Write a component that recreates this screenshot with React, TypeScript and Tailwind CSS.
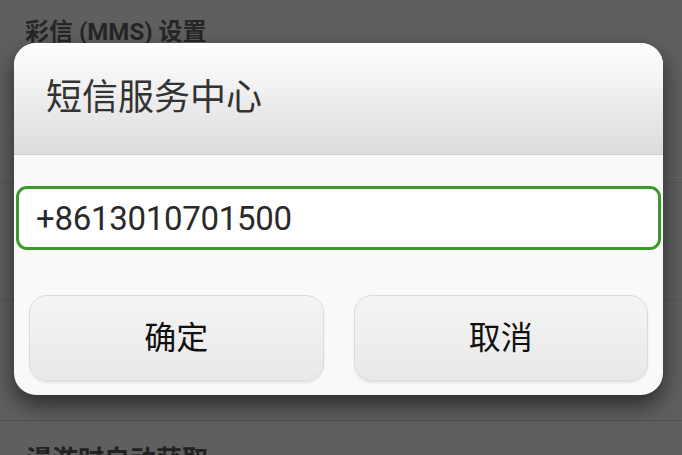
export default function App() {
  return (
    <div
      className="relative w-[682px] h-[455px] overflow-hidden bg-[#5f5f5f]"
      style={{ fontFamily: "Roboto, 'Noto Sans CJK SC', sans-serif" }}
    >
      {/* settings list behind the dialog */}
      <div className="flex flex-col">
        <div className="h-[62px] pl-[25px] pt-[14px] text-[24px] font-bold leading-[36px] text-[#262626]">
          彩信 (MMS) 设置
        </div>
        <div className="h-[121px] border-b border-[#555]" />
        <div className="h-[118px] border-b border-[#555]" />
        <div className="h-[120px] border-b border-[#4f4f4f]" />
        <div className="pl-[26px] pt-[22px] text-[26px] font-bold leading-[34px] text-[#222]">
          漫游时自动获取
        </div>
      </div>

      {/* dialog */}
      <div className="absolute left-[14px] top-[43px] w-[649px] h-[352px] rounded-[22px] overflow-hidden bg-[#f9f9f9] shadow-[0_10px_22px_rgba(0,0,0,0.55)] flex flex-col">
        <div className="h-[112px] border-b border-[#d0d0d0] bg-gradient-to-b from-[#ffffff] to-[#dcdcdc] pl-[32px] pt-[32px]">
          <span className="text-[36px] leading-[46px] text-[#333]">短信服务中心</span>
        </div>
        <div className="flex flex-col px-[2px] pt-[31px]">
          <div className="h-[64px] rounded-[11px] border-[3px] border-[#3c9a2c] bg-white flex items-center pl-[17px]">
            <span className="text-[33px] leading-none text-[#2a2a2a] tracking-[-0.3px]">+8613010701500</span>
          </div>
        </div>
        <div className="grid grid-cols-2 gap-[30px] px-[15px] pt-[45px]">
          <button className="h-[86px] rounded-[18px] border border-[#dadada] bg-gradient-to-b from-[#f4f4f4] to-[#e9e9e9] shadow-[0_2px_2px_rgba(0,0,0,0.08)] text-[32px] text-[#111]">
            确定
          </button>
          <button className="h-[86px] rounded-[18px] border border-[#dadada] bg-gradient-to-b from-[#f4f4f4] to-[#e9e9e9] shadow-[0_2px_2px_rgba(0,0,0,0.08)] text-[32px] text-[#111]">
            取消
          </button>
        </div>
      </div>
    </div>
  );
}
